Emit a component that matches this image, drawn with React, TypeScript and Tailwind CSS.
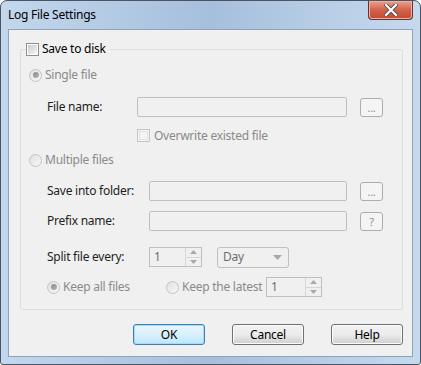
import React from 'react';

const font = { fontFamily: '"Noto Sans", "Open Sans", sans-serif', letterSpacing: '-0.25px' };

function CheckBox({ disabled }: { disabled?: boolean }) {
  return (
    <div
      className={`w-[13px] h-[13px] shrink-0 border p-[1px] ${disabled ? 'border-[#c5c5c5] bg-[#f4f4f4]' : 'border-[#8e8f8f] bg-white'}`}
    >
      <div
        className={`w-full h-full ${disabled ? 'bg-[#f4f4f4] border border-[#e2e2e2]' : 'bg-gradient-to-br from-[#cbcbcb] to-[#f6f6f6]'}`}
      />
    </div>
  );
}

function Radio({ checked }: { checked?: boolean }) {
  return (
    <div className="w-[13px] h-[13px] shrink-0 rounded-full border border-[#c3c3c3] bg-gradient-to-br from-[#e0e0e0] to-[#f8f8f8] flex items-center justify-center">
      {checked && <div className="w-[6px] h-[6px] rounded-full bg-gradient-to-br from-[#8a8a8a] to-[#b5b5b5]" />}
    </div>
  );
}

function TextBox({ width, value }: { width: string; value?: string }) {
  return (
    <div className={`${width} h-[20px] shrink-0 border border-[#bfbfbf] rounded-[2px] bg-[#f0f0f0] flex items-center pl-[4px] text-[#6d6d6d]`}>
      {value}
    </div>
  );
}

function SmallButton({ label }: { label: string }) {
  return (
    <div className="w-[23px] h-[19px] shrink-0 ml-[13px] border border-[#adadad] rounded-[3px] bg-[#f4f4f4] flex items-center justify-center text-[11px] text-[#8d8d8d] leading-none">
      {label}
    </div>
  );
}

function Spinner({ width }: { width: string }) {
  return (
    <div className={`${width} h-[20px] shrink-0 border border-[#bfbfbf] bg-[#f0f0f0] flex`}>
      <div className="flex-1 flex items-center pl-[4px] text-[#6d6d6d]">1</div>
      <div className="w-[16px] flex flex-col border-l border-[#d6d6d6]">
        <div className="flex-1 flex items-center justify-center border-b border-[#d6d6d6]">
          <svg width="7" height="4" viewBox="0 0 7 4"><path d="M0 4 L3.5 0 L7 4Z" fill="#a8a8a8" /></svg>
        </div>
        <div className="flex-1 flex items-center justify-center">
          <svg width="7" height="4" viewBox="0 0 7 4"><path d="M0 0 L3.5 4 L7 0Z" fill="#a8a8a8" /></svg>
        </div>
      </div>
    </div>
  );
}

function Label({ children }: { children: React.ReactNode }) {
  return <div className="shrink-0 whitespace-nowrap text-[#1e1e1e]">{children}</div>;
}

function DlgButton({ label, primary }: { label: string; primary?: boolean }) {
  return (
    <div
      className={`w-[72px] h-[21px] rounded-[3px] border flex items-center justify-center text-black ${
        primary
          ? 'border-[#3c7fb1] bg-gradient-to-b from-[#eaf6fd] via-[#d9f0fc] to-[#bee6fd] shadow-[inset_0_0_0_1px_#a6dbf5]'
          : 'border-[#707070] bg-gradient-to-b from-[#f2f2f2] via-[#ebebeb] to-[#cfcfcf] shadow-[inset_0_0_0_1px_#fcfcfc]'
      }`}
    >
      {label}
    </div>
  );
}

export default function App() {
  return (
    <div className="w-[421px] h-[365px] bg-white" style={font}>
      <div className="w-[421px] h-[365px] flex flex-col rounded-t-[7px] rounded-b-[3px] border border-[#4a5563] bg-gradient-to-r from-[#c3d7ed] via-[#a6bfdc] to-[#c6daee] px-[7px] pb-[7px]">
        {/* Title bar */}
        <div className="h-[28px] flex items-start shrink-0">
          <div className="pt-[6px] text-[12px] text-black leading-[16px]">Log File Settings</div>
          <div className="ml-auto w-[45px] h-[19px] rounded-b-[4px] border border-t-0 border-[#6e3026] bg-gradient-to-b from-[#e8a291] via-[#d4604b] to-[#c34a33] shadow-[inset_0_0_0_1px_#eab3a5] flex items-center justify-center">
            <svg width="14" height="12" viewBox="0 0 14 12">
              <path d="M2 1 L12 11 M12 1 L2 11" stroke="#4c4c4c" strokeWidth="4" strokeLinecap="square" />
              <path d="M2 1 L12 11 M12 1 L2 11" stroke="#ffffff" strokeWidth="2.2" strokeLinecap="square" />
            </svg>
          </div>
        </div>

        {/* Client area */}
        <div className="flex-1 border border-[#8fa2b8] bg-[#f0f0f0] text-[12px] leading-[16px] flex flex-col whitespace-nowrap">
          {/* Group box */}
          <div className="mt-[19px] ml-[11px] mr-[9px] h-[261px] border border-[#d5dfe5] rounded-[3px] flex flex-col pb-[12px]">
            <div className="-mt-[8px] ml-[5px] self-start h-[14px] flex items-center gap-[3px] bg-[#f0f0f0] pr-[4px]">
              <CheckBox />
              <span className="text-black">Save to disk</span>
            </div>

            {/* Single file */}
            <div className="mt-[9px] h-[20px] flex items-center pl-[8px] gap-[3px] text-[#8a8a8a]">
              <Radio checked />
              <span>Single file</span>
            </div>

            <div className="mt-[12px] h-[20px] flex items-center pl-[26px]">
              <div className="w-[90px]"><Label>File name:</Label></div>
              <TextBox width="w-[210px]" />
              <SmallButton label="..." />
            </div>

            <div className="mt-[12px] h-[13px] flex items-center pl-[116px] gap-[4px] text-[#8a8a8a]">
              <CheckBox disabled />
              <span>Overwrite existed file</span>
            </div>

            {/* Multiple files */}
            <div className="mt-[8px] h-[20px] flex items-center pl-[8px] gap-[3px] text-[#8a8a8a]">
              <Radio />
              <span>Multiple files</span>
            </div>

            <div className="mt-[11px] h-[20px] flex items-center pl-[26px]">
              <div className="w-[102px]"><Label>Save into folder:</Label></div>
              <TextBox width="w-[198px]" />
              <SmallButton label="..." />
            </div>

            <div className="mt-[10px] h-[20px] flex items-center pl-[26px]">
              <div className="w-[102px]"><Label>Prefix name:</Label></div>
              <TextBox width="w-[198px]" />
              <SmallButton label="?" />
            </div>

            <div className="mt-[16px] h-[20px] flex items-center pl-[26px]">
              <div className="w-[102px]"><Label>Split file every:</Label></div>
              <Spinner width="w-[53px]" />
              <div className="ml-[15px] w-[72px] h-[21px] border border-[#bfbfbf] rounded-[3px] bg-[#f0f0f0] flex items-center pl-[5px] pr-[6px] text-[#6d6d6d]">
                <span>Day</span>
                <svg className="ml-auto" width="9" height="5" viewBox="0 0 9 5"><path d="M0 0 L4.5 5 L9 0Z" fill="#a8a8a8" /></svg>
              </div>
            </div>

            <div className="mt-[10px] h-[20px] flex items-center pl-[26px] text-[#8a8a8a]">
              <div className="w-[119px] shrink-0 flex items-center gap-[3px]">
                <Radio checked />
                <span>Keep all files</span>
              </div>
              <div className="w-[100px] shrink-0 flex items-center gap-[3px]">
                <Radio />
                <span>Keep the latest</span>
              </div>
              <Spinner width="w-[56px]" />
            </div>
          </div>

          {/* Buttons */}
          <div className="mt-[14px] mr-[9px] flex justify-end gap-[27px]">
            <DlgButton label="OK" primary />
            <DlgButton label="Cancel" />
            <DlgButton label="Help" />
          </div>
        </div>
      </div>
    </div>
  );
}
